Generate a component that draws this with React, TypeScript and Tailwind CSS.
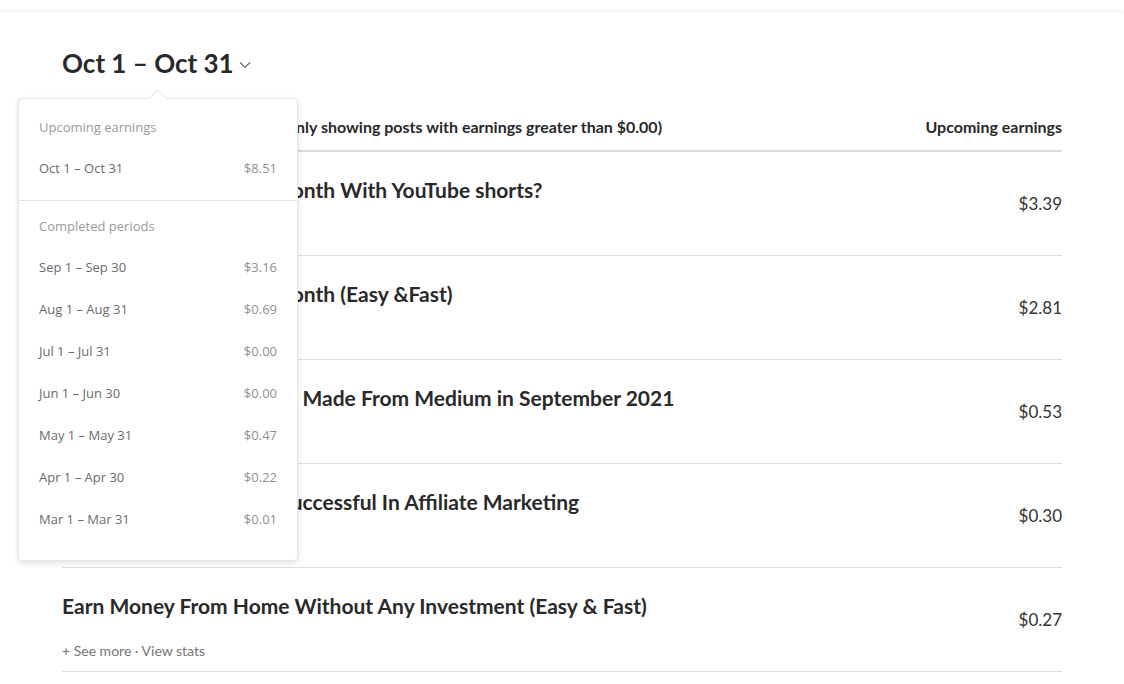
type Post = {
  title: string
  amount: string
}

const posts: Post[] = [
  { title: 'How I Earn $1000 Per Month With YouTube shorts?', amount: '$3.39' },
  { title: 'How I Earn $5000 Per Month (Easy &Fast)', amount: '$2.81' },
  { title: 'How much Money I Have Made From Medium in September 2021', amount: '$0.53' },
  { title: 'How To Become Really Successful In Affiliate Marketing', amount: '$0.30' },
  { title: 'Earn Money From Home Without Any Investment (Easy & Fast)', amount: '$0.27' },
]

const periods = [
  { label: 'Sep 1 – Sep 30', amount: '$3.16' },
  { label: 'Aug 1 – Aug 31', amount: '$0.69' },
  { label: 'Jul 1 – Jul 31', amount: '$0.00' },
  { label: 'Jun 1 – Jun 30', amount: '$0.00' },
  { label: 'May 1 – May 31', amount: '$0.47' },
  { label: 'Apr 1 – Apr 30', amount: '$0.22' },
  { label: 'Mar 1 – Mar 31', amount: '$0.01' },
]

const sans = "font-['Lato','Liberation_Sans',sans-serif]"
const popFont = "font-['Open_Sans','Noto_Sans',sans-serif]"

function PeriodRow({ label, amount }: { label: string; amount: string }) {
  return (
    <div className="h-[42px] flex items-center justify-between text-[13px] leading-5">
      <span className="text-[#6b6b6b]">{label}</span>
      <span className="text-[#8f8f8f]">{amount}</span>
    </div>
  )
}

function PeriodMenu() {
  return (
    <div className={`absolute top-[53px] left-[-44px] w-[280px] bg-white border border-[#e6e6e6] rounded-[4px] shadow-[0_2px_6px_rgba(0,0,0,0.12)] z-10 ${popFont}`}>
      {/* arrow */}
      <div className="absolute -top-[7px] left-[132px] w-[13px] h-[13px] bg-white border-l border-t border-[#e6e6e6] rotate-45" />
      <div className="px-5 pt-[18px] pb-[11px]">
        <p className="text-[13px] leading-5 text-[#9a9a9a]">Upcoming earnings</p>
        <div className="mt-[10px]">
          <PeriodRow label="Oct 1 – Oct 31" amount="$8.51" />
        </div>
      </div>
      <div className="border-t border-[#e0e0e0] px-5 pt-[15px] pb-[20px]">
        <p className="text-[13px] leading-5 text-[#9a9a9a]">Completed periods</p>
        <div className="mt-[10px]">
          {periods.map(p => <PeriodRow key={p.label} label={p.label} amount={p.amount} />)}
        </div>
      </div>
    </div>
  )
}

export default function App() {
  return (
    <div className={`min-h-screen bg-white text-[#292929] ${sans}`}>
      <div className="h-[9px] bg-white shadow-[0_3px_7px_rgba(0,0,0,0.05)]" />

      <main className="mx-auto max-w-[1000px] pt-9">
        <div className="relative">
          <button className="flex items-center gap-[5px] h-9">
            <span className="text-[26px] leading-9 font-bold">Oct 1 – Oct 31</span>
            <svg width="12" height="8" viewBox="0 0 12 8" className="mt-[3px]" fill="none">
              <polyline points="1,1.5 6,6.5 11,1.5" stroke="#6b6b6b" strokeWidth="1.2" />
            </svg>
          </button>
          <PeriodMenu />
        </div>

        <div className="mt-9 flex items-center justify-between pb-[13px] border-b-2 border-[#dadada] text-[16px] leading-5 font-bold">
          <span>Earnings for post in this period (only showing posts with earnings greater than $0.00)</span>
          <span>Upcoming earnings</span>
        </div>

        {posts.map(p => (
          <div key={p.title} className="flex items-center justify-between border-b border-[#dedede]">
            <div className="pt-6 pb-[10px]">
              <p className="text-[21px] leading-7 font-bold">{p.title}</p>
              <p className="mt-[21px] text-[14px] leading-5 text-[#757575]">+ See more · View stats</p>
            </div>
            <span className="text-[17px] leading-6 text-[#333]">{p.amount}</span>
          </div>
        ))}
      </main>
    </div>
  )
}
